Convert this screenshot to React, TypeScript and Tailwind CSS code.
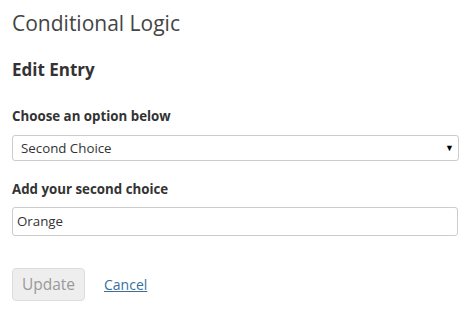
export default function App() {
  return (
    <div
      className="h-[314px] w-[474px] bg-white px-3 pt-[8px] text-[#333]"
      style={{ fontFamily: '"Open Sans", sans-serif' }}
    >
      <h1 className="text-[21px] leading-[30px] text-[#444]">Conditional Logic</h1>

      <h2 className="mt-[20px] text-[17px] font-bold leading-[24px] text-[#333]">Edit Entry</h2>

      <form className="mt-[25px]" onSubmit={(e) => e.preventDefault()}>
        <label className="block text-[13.3px] font-bold leading-[18px] text-[#333]">
          Choose an option below
        </label>
        <div className="relative mt-[10px] h-[26px] w-[447px] rounded-[3px] border border-[#ccc] bg-white">
          <span className="absolute left-[8px] top-[3px] text-[13.3px] leading-[18px] text-[#333]">
            Second Choice
          </span>
          <span className="absolute right-[4px] top-[5px] text-[9px] text-black">▼</span>
        </div>

        <label className="mt-[19px] block text-[13.3px] font-bold leading-[18px] text-[#333]">
          Add your second choice
        </label>
        <div className="mt-[9px] flex h-[29px] w-[446px] items-center rounded-[3px] border border-[#ccc] bg-white px-[4px] text-[13.3px] text-[#333]">
          Orange
        </div>

        <div className="mt-[32px] flex items-center gap-[19px]">
          <button
            type="button"
            className="h-[33px] w-[73px] rounded-[4px] border border-[#ddd] bg-[#eee] text-[15.5px] text-[#999]"
          >
            Update
          </button>
          <a href="#" className="text-[14px] text-[#3a6f9a] underline">
            Cancel
          </a>
        </div>
      </form>
    </div>
  );
}
